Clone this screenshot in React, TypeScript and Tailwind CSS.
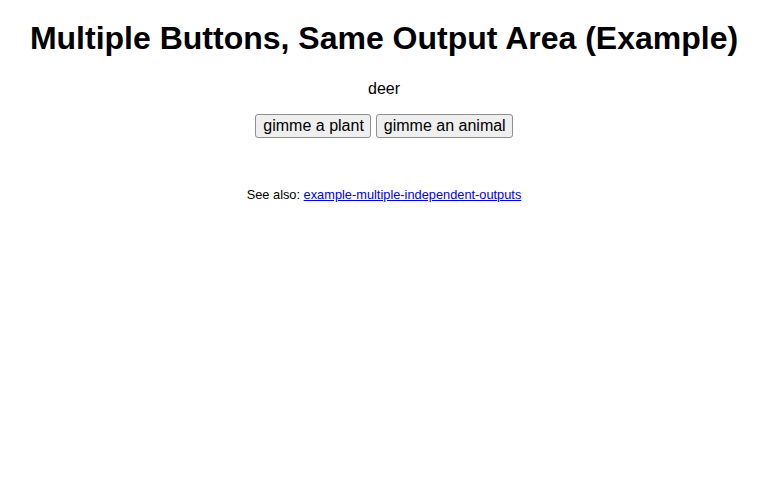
import React, { useState } from "react";

const PLANTS = ["fern", "oak", "moss", "rose"];
const ANIMALS = ["deer", "fox", "owl", "hare"];

export default function App() {
  const [output, setOutput] = useState("deer");
  const pick = (list: string[]) => setOutput(list[Math.floor(Math.random() * list.length)]);

  return (
    <div className="bg-white text-black text-center" style={{ fontFamily: '"Liberation Sans", Arial, sans-serif' }}>
      <h1 className="text-[32px] leading-[37px] font-bold pt-[20px] m-0">
        Multiple Buttons, Same Output Area (Example)
      </h1>
      <div className="mt-[23px] text-[16px] leading-[18px]">{output}</div>
      <div className="mt-[16px] flex justify-center gap-[5px]">
        <button
          className="h-[24px] pl-[7px] pr-[6px] text-[16px] leading-[18px] bg-[#efefef] border border-[#8f8f8f] rounded-[3px] text-black"
          onClick={() => pick(PLANTS)}
        >
          gimme a plant
        </button>
        <button
          className="h-[24px] pl-[7px] pr-[6px] text-[16px] leading-[18px] bg-[#efefef] border border-[#8f8f8f] rounded-[3px] text-black"
          onClick={() => pick(ANIMALS)}
        >
          gimme an animal
        </button>
      </div>
      <p className="mt-[49px] text-[12.8px] leading-[15px]">
        See also:{" "}
        <a href="#" className="text-[#0000ee] underline">
          example-multiple-independent-outputs
        </a>
      </p>
    </div>
  );
}
